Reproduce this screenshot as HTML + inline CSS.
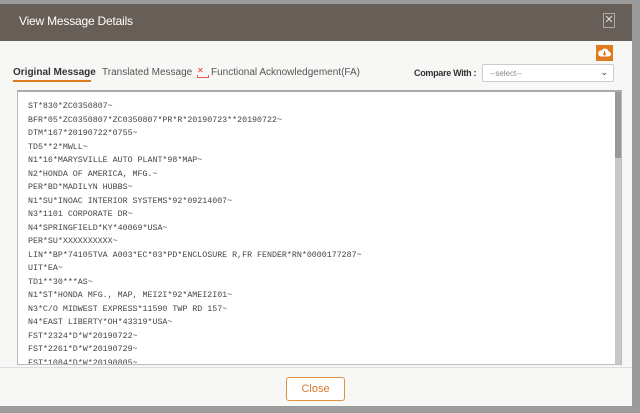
<!DOCTYPE html>
<html><head><style>
*{margin:0;padding:0;box-sizing:border-box}
body{width:640px;height:413px;background:#9b9b9b;position:relative;overflow:hidden;font-family:"Liberation Sans",sans-serif}
.modal{position:absolute;left:0;top:4px;width:632px;height:402px;background:#f7f7f5}
.hdr{position:absolute;left:0;top:0;width:632px;height:37px;background:#675e57}
.hdr .t{position:absolute;left:19px;top:10px;color:#fff;font-size:12px;letter-spacing:-0.2px}
.x{position:absolute;left:603px;top:9px;width:12px;height:15px;border:1px solid #aaa;color:#ddd;font-size:11px;line-height:13px;text-align:center}
.dl{position:absolute;left:596px;top:41px;width:17px;height:16px;background:#e07a1f}
.tab{position:absolute;top:63px;font-size:10px;color:#555;white-space:nowrap}
.sel{position:absolute;left:482px;top:60px;width:132px;height:18px;background:#fff;border:1px solid #ccc;border-radius:2px;font-size:8px;color:#888;padding:4px 7px}
.ta{position:absolute;left:17px;top:86px;width:605px;height:275px;background:#fff;border:1px solid #bbb;border-top:2px solid #aaa;overflow:hidden}
.ta pre{position:absolute;left:10px;top:8px;font-family:"Liberation Mono",monospace;font-size:8.3px;line-height:13.5px;color:#444}
.sb{position:absolute;right:0;top:0;width:6px;height:100%;background:#c8c8c8}
.sb i{position:absolute;left:0;top:0;width:6px;height:66px;background:#999}
.sep{position:absolute;left:0;top:363px;width:632px;height:1px;background:#ddd}
.btn{position:absolute;left:286px;top:373px;width:59px;height:24px;border:1px solid #e0923f;border-radius:3px;background:#fff;color:#d9782a;font-size:11px;text-align:center;line-height:22px}
</style></head><body>
<div class="modal">
<div class="hdr"><div class="t">View Message Details</div><div class="x">✕</div></div>
<div class="dl"><svg width="17" height="16" viewBox="0 0 17 16"><path d="M4.5 11.5h8a2.5 2.5 0 0 0 0-5 3.5 3.5 0 0 0-6.6-1A2.7 2.7 0 0 0 4.5 11.5z" fill="#fff"/><path d="M8.5 6v4M7 8.5l1.5 1.5 1.5-1.5" stroke="#e07a1f" stroke-width="1.2" fill="none"/></svg></div>
<div class="tab" style="left:13px;color:#333;font-weight:bold">Original Message</div>
<div style="position:absolute;left:13px;top:76px;width:78px;height:2px;background:#e07a1f"></div>
<div class="tab" style="left:102px">Translated Message</div>
<div class="tab" style="left:197px;color:#e33;font-size:8px;top:62px">✕</div>
<div style="position:absolute;left:197px;top:71px;width:12px;height:3px;border:1px solid #e55;border-top:none"></div>
<div class="tab" style="left:211px">Functional Acknowledgement(FA)</div>
<div class="tab" style="left:414px;color:#333;font-weight:bold;font-size:9px;letter-spacing:-0.3px;top:64px">Compare With :</div>
<div class="sel">--select--<span style="position:absolute;right:5px;top:2px;color:#333;font-size:9px">⌄</span></div>
<div class="ta"><pre>ST*830*ZC0350807~
BFR*05*ZC0350807*ZC0350807*PR*R*20190723**20190722~
DTM*167*20190722*0755~
TD5**2*MWLL~
N1*16*MARYSVILLE AUTO PLANT*98*MAP~
N2*HONDA OF AMERICA, MFG.~
PER*BD*MADILYN HUBBS~
N1*SU*INOAC INTERIOR SYSTEMS*92*09214007~
N3*1101 CORPORATE DR~
N4*SPRINGFIELD*KY*40069*USA~
PER*SU*XXXXXXXXXX~
LIN**BP*74105TVA A003*EC*03*PD*ENCLOSURE R,FR FENDER*RN*0000177287~
UIT*EA~
TD1**30***AS~
N1*ST*HONDA MFG., MAP, MEI2I*92*AMEI2I01~
N3*C/O MIDWEST EXPRESS*11590 TWP RD 157~
N4*EAST LIBERTY*OH*43319*USA~
FST*2324*D*W*20190722~
FST*2261*D*W*20190729~
FST*1084*D*W*20190805~</pre><div class="sb"><i></i></div></div>
<div class="sep"></div>
<div class="btn">Close</div>
</div>
</body></html>
